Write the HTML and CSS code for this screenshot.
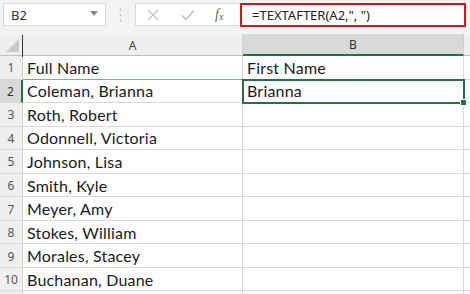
FILE: index.html
```html
<!DOCTYPE html>
<html>
<head>
<meta charset="utf-8">
<link rel="stylesheet" href="styles.css">
</head>
<body>
<div class="app">
  <div class="toolbar">
    <div class="namebox">
      <span class="ref">B2</span>
      <svg class="caret" width="8" height="5" viewBox="0 0 8 5"><path d="M0 0h8L4 5z" fill="#8a8a8a"/></svg>
    </div>
    <div class="sep">
      <svg width="3" height="14" viewBox="0 0 3 14"><circle cx="1.5" cy="1.5" r="0.9" fill="#b5b5b5"/><circle cx="1.5" cy="7" r="0.9" fill="#b5b5b5"/><circle cx="1.5" cy="12.5" r="0.9" fill="#b5b5b5"/></svg>
    </div>
    <div class="fxbox">
      <svg class="icon" width="12" height="12" viewBox="0 0 12 12"><path d="M1 1L11 11M11 1L1 11" stroke="#c2c2c2" stroke-width="1.4" fill="none"/></svg>
      <svg class="icon" width="14" height="12" viewBox="0 0 14 12"><path d="M1 6.5L5 10.5L13 1.5" stroke="#c2c2c2" stroke-width="1.6" fill="none"/></svg>
      <span class="fx">f<sub>x</sub></span>
    </div>
    <div class="formula">=TEXTAFTER(A2,", ")</div>
  </div>
  <div class="sheet">
    <div class="corner"><span class="tri"></span></div>
    <div class="colhead">A</div>
    <div class="colhead sel">B</div>
    <div class="colhead rest"></div>

    <div class="rowhead">1</div><div class="cell a1">Full Name</div><div class="cell">First Name</div><div class="cell rest"></div>
    <div class="rowhead sel">2</div><div class="cell">Coleman, Brianna</div><div class="cell active">Brianna<span class="handle"></span></div><div class="cell rest"></div>
    <div class="rowhead">3</div><div class="cell">Roth, Robert</div><div class="cell"></div><div class="cell rest"></div>
    <div class="rowhead">4</div><div class="cell">Odonnell, Victoria</div><div class="cell"></div><div class="cell rest"></div>
    <div class="rowhead">5</div><div class="cell">Johnson, Lisa</div><div class="cell"></div><div class="cell rest"></div>
    <div class="rowhead">6</div><div class="cell">Smith, Kyle</div><div class="cell"></div><div class="cell rest"></div>
    <div class="rowhead">7</div><div class="cell">Meyer, Amy</div><div class="cell"></div><div class="cell rest"></div>
    <div class="rowhead">8</div><div class="cell">Stokes, William</div><div class="cell"></div><div class="cell rest"></div>
    <div class="rowhead">9</div><div class="cell">Morales, Stacey</div><div class="cell"></div><div class="cell rest"></div>
    <div class="rowhead">10</div><div class="cell">Buchanan, Duane</div><div class="cell"></div><div class="cell rest"></div>
    <div class="rowhead"></div><div class="cell"></div><div class="cell"></div><div class="cell rest"></div>
  </div>
  <span class="cursor"></span>
</div>
</body>
</html>
```
FILE: styles.css
```css
html, body {
  margin: 0;
  padding: 0;
  background: #ffffff;
  overflow: hidden;
}
.app {
  width: 470px;
  height: 294px;
  position: relative;
  overflow: hidden;
  font-family: "Noto Sans", "Open Sans", sans-serif;
}
.toolbar {
  height: 34px;
  background: #f3f3f3;
  display: flex;
  align-items: flex-start;
  padding: 3px 0 0 3px;
  box-sizing: border-box;
}
.namebox {
  width: 103px;
  height: 23px;
  box-sizing: border-box;
  background: #fff;
  border: 1px solid #dadada;
  display: flex;
  align-items: center;
  justify-content: space-between;
  padding: 0 7px 0 7px;
}
.ref {
  font-size: 13px;
  color: #333;
}
.caret {
  margin-top: -2px;
}
.sep {
  width: 29px;
  height: 23px;
  display: flex;
  align-items: center;
  justify-content: center;
}
.fxbox {
  width: 104px;
  height: 23px;
  box-sizing: border-box;
  background: #fff;
  border: 1px solid #dadada;
  border-right: none;
  display: flex;
  align-items: center;
  padding-left: 11px;
  gap: 0;
}
.fxbox .icon:nth-child(1) {
  margin-right: 22px;
}
.fxbox .icon:nth-child(2) {
  margin-right: 20px;
}
.fx {
  font-family: "Liberation Serif", serif;
  font-style: italic;
  font-size: 14px;
  color: #666;
  line-height: 1;
}
.fx sub {
  font-size: 10px;
  vertical-align: -1px;
}
.formula {
  margin-left: 1px;
  width: 226px;
  height: 24px;
  box-sizing: border-box;
  border: 2px solid #d2141e;
  background: #fff;
  font-size: 13px;
  color: #222;
  padding-left: 10px;
  line-height: 20px;
}
.sheet {
  display: grid;
  grid-template-columns: 23px 220px 221px 1fr;
  grid-template-rows: 22px repeat(11, 23.55px);
}
.corner {
  background: #efefef;
  border-right: 1px solid #d0d0d0;
  border-bottom: 1px solid #bdbdbd;
  position: relative;
}
.tri {
  position: absolute;
  right: 3px;
  bottom: 3px;
  width: 0;
  height: 0;
  border-left: 13px solid transparent;
  border-bottom: 13px solid #c8c8c8;
}
.colhead {
  background: #efefef;
  border-right: 1px solid #d0d0d0;
  border-bottom: 1px solid #bdbdbd;
  font-size: 12px;
  color: #444;
  display: flex;
  align-items: center;
  justify-content: center;
  padding-top: 1px;
}
.colhead.sel {
  background: #d9d9d9;
  border-bottom: 2px solid #217346;
  color: #333;
}
.colhead.rest {
  border-right: none;
}
.rowhead {
  background: #efefef;
  border-right: 1px solid #d0d0d0;
  border-bottom: 1px solid #dadada;
  font-size: 12px;
  color: #555;
  display: flex;
  align-items: center;
  justify-content: center;
  padding-top: 1px;
}
.rowhead.sel {
  background: #d9d9d9;
  border-right: 2px solid #217346;
  color: #333;
}
.cell {
  border-right: 1px solid #dadada;
  border-bottom: 1px solid #dadada;
  font-family: "Lato", "Noto Sans", sans-serif;
  font-size: 16px;
  color: #1a1a1a;
  padding-left: 4px;
  display: flex;
  align-items: center;
  white-space: nowrap;
  position: relative;
  letter-spacing: 0.2px;
}
.cell.a1 {
  border-bottom-color: #8aa88a;
}
.cell.rest {
  border-right: none;
}
.cell.active {
  outline: 2px solid #217346;
  outline-offset: -1px;
  z-index: 1;
}
.handle {
  position: absolute;
  right: -4px;
  bottom: -4px;
  width: 5px;
  height: 5px;
  background: #217346;
  border: 1px solid #fff;
}
.cursor {
  position: absolute;
  left: 22px;
  top: 35px;
  width: 1px;
  height: 22px;
  background: #333;
}
```
